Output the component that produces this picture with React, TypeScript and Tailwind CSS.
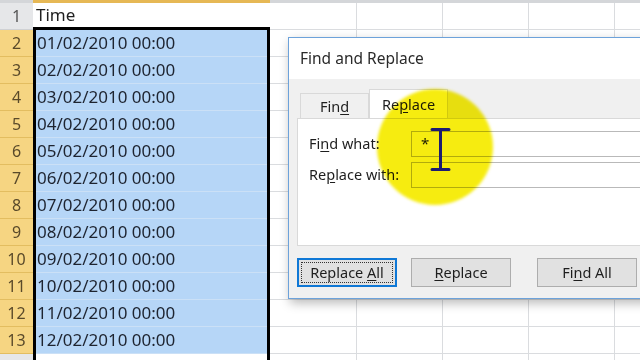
import React from 'react';

const dates = Array.from({ length: 12 }, (_, i) => `${String(i + 1).padStart(2, '0')}/02/2010 00:00`);
const otherCols = [0, 1, 2, 3, 4];

function Mn({ children }: { children: React.ReactNode }) {
  return <span className="underline underline-offset-2 decoration-1">{children}</span>;
}

function Sheet() {
  return (
    <div className="flex flex-col">
      {/* column header strip, only its bottom edge is visible */}
      <div className="flex h-[3px]">
        <div className="w-[33px] shrink-0 bg-[#d4d6d9]" />
        <div className="w-[237px] shrink-0 bg-[#e6b855]" />
        <div className="flex-1 bg-[#d4d6d9]" />
      </div>
      <div className="flex">
        {/* row headers */}
        <div className="w-[33px] shrink-0 flex flex-col">
          <div className="h-[27px] flex items-center justify-center bg-[#e6e7e9] border-b border-[#cfd1d4] text-[#555] text-[16px]">1</div>
          {dates.map((_, i) => (
            <div key={i} className="h-[27px] flex items-center justify-center bg-[#f6d582] border-b border-[#e3bd60] text-[#5a4a2a] text-[16px]">
              {i + 2}
            </div>
          ))}
          <div className="h-[27px] bg-[#e6e7e9]" />
        </div>
        {/* column A */}
        <div className="w-[237px] shrink-0 flex flex-col">
          <div className="h-[24px] flex items-center pl-[3px] text-[17px] text-[#1f1f1f] bg-white">Time</div>
          <div className="border-[3px] border-b-0 border-black flex flex-col">
            {dates.map((d) => (
              <div key={d} className="h-[27px] flex items-center pl-[1px] bg-[#b6d6f7] border-b border-[#cbe0f6] text-[17px] text-[#1e2430]">
                {d}
              </div>
            ))}
            <div className="h-[27px] bg-white" />
          </div>
        </div>
        {/* remaining columns */}
        {otherCols.map((c) => (
          <div key={c} className={`${c === 0 ? 'w-[87px]' : 'w-[86px]'} shrink-0 flex flex-col border-r border-[#dadcdf]`}>
            {Array.from({ length: 14 }, (_, r) => (
              <div key={r} className="h-[27px] bg-white border-b border-[#dadcdf]" />
            ))}
          </div>
        ))}
      </div>
    </div>
  );
}

function Dialog() {
  return (
    <div className="absolute left-[288px] top-[37px] w-[400px] h-[262px] bg-[#f0f0f0] border border-[#6da2da] shadow-[2px_4px_10px_rgba(0,0,0,0.28)] flex flex-col text-[#1e1e1e] text-[14.5px]">
      <div className="h-[41px] shrink-0 bg-white flex items-center pl-[11px] text-[15.5px] text-[#2a2a2a]">Find and Replace</div>
      <div className="flex items-end pl-[11px] h-[40px] shrink-0 -mb-[1px]">
        <div className="w-[69px] h-[26px] border border-b-0 border-[#d9d9d9] bg-[#f0f0f0] flex items-center justify-center">
          <span>Fin<Mn>d</Mn></span>
        </div>
        <div className="w-[79px] h-[30px] border border-b-0 border-[#d9d9d9] bg-white flex items-center justify-center">
          <span>Re<Mn>p</Mn>lace</span>
        </div>
      </div>
      <div className="ml-[8px] h-[128px] shrink-0 bg-white border border-[#d9d9d9] flex flex-col pt-[12px] gap-[5px]">
        <div className="flex items-center h-[26px]">
          <div className="w-[113px] pl-[11px]">Fi<Mn>n</Mn>d what:</div>
          <div className="flex-1 h-[26px] border border-[#b9b9b9] bg-white flex items-start pt-[2px] pl-[9px] text-[15px] leading-[18px]">*</div>
        </div>
        <div className="flex items-center h-[26px]">
          <div className="w-[113px] pl-[11px]">Re<Mn>p</Mn>lace with:</div>
          <div className="flex-1 h-[26px] border border-[#b9b9b9] bg-white" />
        </div>
      </div>
      <div className="flex ml-[8px] mt-[12px] gap-[14px]">
        <div className="w-[100px] h-[29px] border-2 border-[#0f78d6] bg-[#e1e1e1] p-[2px]">
          <div className="w-full h-full border border-dotted border-[#333] flex items-center justify-center">
            <span>Replace <Mn>A</Mn>ll</span>
          </div>
        </div>
        <div className="w-[100px] h-[29px] border border-[#adadad] bg-[#e1e1e1] flex items-center justify-center">
          <span><Mn>R</Mn>eplace</span>
        </div>
        <div className="w-[100px] h-[29px] border border-[#adadad] bg-[#e1e1e1] flex items-center justify-center ml-[12px]">
          <span>Fi<Mn>n</Mn>d All</span>
        </div>
      </div>
    </div>
  );
}

export default function App() {
  return (
    <div
      className="relative w-[640px] h-[360px] overflow-hidden bg-white"
      style={{ fontFamily: '"Noto Sans", "Open Sans", sans-serif' }}
    >
      <Sheet />
      <Dialog />
      {/* highlight around the pointer */}
      <div className="absolute left-[377px] top-[89px] w-[116px] h-[116px] rounded-full bg-[#f6ec10] mix-blend-multiply blur-[1.5px]" />
      {/* I-beam pointer */}
      <svg className="absolute left-[429px] top-[126px]" width="24" height="48" viewBox="0 0 24 48">
        <path d="M3 3.5H20M11.5 3.5V43.5M3 43.5H20" stroke="#1c1c72" strokeWidth="3" strokeLinecap="round" fill="none" />
      </svg>
    </div>
  );
}
